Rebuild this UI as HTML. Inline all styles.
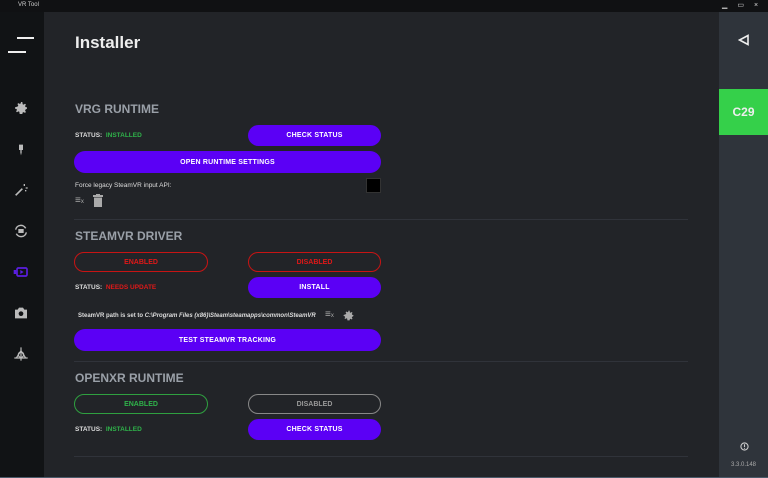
<!DOCTYPE html>
<html><head><style>
*{margin:0;padding:0;box-sizing:border-box}
body{width:768px;height:478px;background:#222428;font-family:"Liberation Sans",sans-serif;position:relative;overflow:hidden}
.a{position:absolute}
.btn{position:absolute;border-radius:11px;background:#5b00f5;color:#fff;font-size:7px;font-weight:bold;display:flex;align-items:center;justify-content:center;letter-spacing:.2px}
.ob{position:absolute;border-radius:11px;border:1.5px solid;font-size:7px;font-weight:bold;display:flex;align-items:center;justify-content:center}
.h{position:absolute;left:75px;color:#9aa0a8;font-size:12px;font-weight:bold}
.s{position:absolute;left:75px;font-size:6.5px;font-weight:bold;color:#ddd}
.line{position:absolute;left:74px;width:614px;height:1px;background:#30333a}
.ic{position:absolute;left:13px;width:16px;height:16px}
</style></head><body>
<div class="a" style="left:0;top:0;width:768px;height:12px;background:#101113"></div>
<div class="a" style="left:18px;top:2px;font-size:6px;color:#ccc">VR Tool</div>
<div class="a" style="left:722px;top:1px;font-size:7px;color:#ddd;letter-spacing:10px">▁▭×</div>
<div class="a" style="left:0;top:12px;width:44px;height:466px;background:#111315"></div>
<div class="a" style="left:17px;top:37px;width:17px;height:2px;background:#eee"></div>
<div class="a" style="left:8px;top:51px;width:18px;height:2px;background:#eee"></div>
<svg class="ic" style="top:100px" viewBox="0 0 24 24"><path fill="#bbb" d="M12 8a4 4 0 100 8 4 4 0 000-8zm9 5v-2l-2.3-.5-.6-1.5 1.3-2-1.4-1.4-2 1.3-1.5-.6L14 3h-2l-.5 2.3-1.5.6-2-1.3-1.4 1.4 1.3 2-.6 1.5L3 11v2l2.3.5.6 1.5-1.3 2 1.4 1.4 2-1.3 1.5.6L10 21h4l.5-2.3 1.5-.6 2 1.3 1.4-1.4-1.3-2 .6-1.5z"/></svg>
<svg class="ic" style="top:142px" viewBox="0 0 24 24"><path fill="#bbb" d="M9 4h6v8h-2v4l-1 4-1-4v-4H9z"/></svg>
<svg class="ic" style="top:182px" viewBox="0 0 24 24"><path stroke="#bbb" stroke-width="2.5" d="M4 20L14 10"/><path fill="#bbb" d="M16 3h2v3h-2zM19 8h3v2h-3zM18 12h2v2h-2z"/></svg>
<svg class="ic" style="top:223px" viewBox="0 0 24 24"><path fill="none" stroke="#bbb" stroke-width="2.2" d="M4 10a8 8 0 0115-2M20 14a8 8 0 01-15 2"/><rect x="8" y="9" width="8" height="6" fill="#bbb"/></svg>
<svg class="ic" style="top:264px" viewBox="0 0 24 24"><rect x="6" y="6" width="15" height="12" rx="2" fill="none" stroke="#5b1ee0" stroke-width="2.5"/><path fill="#5b1ee0" d="M11 9l5 3-5 3zM1 9h4v6H1z"/></svg>
<svg class="ic" style="top:305px" viewBox="0 0 24 24"><path fill="#bbb" d="M3 7h4l2-3h6l2 3h4v13H3z"/><circle cx="12" cy="13" r="3.5" fill="#111315"/></svg>
<svg class="ic" style="top:346px" viewBox="0 0 24 24"><path fill="none" stroke="#bbb" stroke-width="1.8" d="M12 2v20M2 18h20M12 7l-7 11M12 7l7 11"/><circle cx="12" cy="13" r="4" fill="none" stroke="#bbb" stroke-width="1.8"/></svg>

<div class="a" style="left:75px;top:33px;font-size:17px;font-weight:bold;color:#eee">Installer</div>

<div class="h" style="top:102px">VRG RUNTIME</div>
<div class="s" style="top:132px">STATUS:&nbsp; <span style="color:#2fb34a">INSTALLED</span></div>
<div class="btn" style="left:248px;top:125px;width:133px;height:21px">CHECK STATUS</div>
<div class="btn" style="left:74px;top:151px;width:307px;height:22px">OPEN RUNTIME SETTINGS</div>
<div class="s" style="top:182px;font-weight:normal;color:#ddd">Force legacy SteamVR input API:</div>
<div class="a" style="left:366px;top:178px;width:15px;height:15px;background:#000;border:1px solid #333"></div>
<div class="a" style="left:75px;top:195px;font-size:10px;color:#aaa">≡<span style="font-size:6px">x</span></div>
<svg class="a" style="left:93px;top:194px" width="10" height="13" viewBox="0 0 10 13"><path fill="#aaa" d="M0 1h10v2H0zM3 0h4v1H3zM1 3.5h8V13H1z"/></svg>
<div class="line" style="top:219px"></div>

<div class="h" style="top:229px">STEAMVR DRIVER</div>
<div class="ob" style="left:74px;top:252px;width:134px;height:20px;border-color:#c81414;color:#e01818">ENABLED</div>
<div class="ob" style="left:248px;top:252px;width:133px;height:20px;border-color:#c81414;color:#e01818">DISABLED</div>
<div class="s" style="top:284px">STATUS:&nbsp; <span style="color:#e01818">NEEDS UPDATE</span></div>
<div class="btn" style="left:248px;top:277px;width:133px;height:21px">INSTALL</div>
<div class="a" style="left:78px;top:313px;font-size:6px;font-weight:bold;color:#ddd">SteamVR path is set to <i>C:\Program Files (x86)\Steam\steamapps\common\SteamVR</i></div>
<div class="a" style="left:325px;top:309px;font-size:10px;color:#aaa">≡<span style="font-size:6px">x</span></div>
<svg class="a" style="left:342px;top:309px" width="13" height="13" viewBox="0 0 24 24"><path fill="#aaa" d="M12 8a4 4 0 100 8 4 4 0 000-8zm9 5v-2l-2.3-.5-.6-1.5 1.3-2-1.4-1.4-2 1.3-1.5-.6L14 3h-2l-.5 2.3-1.5.6-2-1.3-1.4 1.4 1.3 2-.6 1.5L3 11v2l2.3.5.6 1.5-1.3 2 1.4 1.4 2-1.3 1.5.6L10 21h4l.5-2.3 1.5-.6 2 1.3 1.4-1.4-1.3-2 .6-1.5z"/></svg>
<div class="btn" style="left:74px;top:329px;width:307px;height:22px">TEST STEAMVR TRACKING</div>
<div class="line" style="top:361px"></div>

<div class="h" style="top:371px">OPENXR RUNTIME</div>
<div class="ob" style="left:74px;top:394px;width:134px;height:20px;border-color:#2fa040;color:#2fb34a">ENABLED</div>
<div class="ob" style="left:248px;top:394px;width:133px;height:20px;border-color:#888;color:#999">DISABLED</div>
<div class="s" style="top:426px">STATUS:&nbsp; <span style="color:#2fb34a">INSTALLED</span></div>
<div class="btn" style="left:248px;top:419px;width:133px;height:21px">CHECK STATUS</div>
<div class="line" style="top:456px"></div>

<div class="a" style="left:719px;top:12px;width:49px;height:466px;background:#2f343b"></div>
<svg class="a" style="left:738px;top:34px" width="12" height="12" viewBox="0 0 12 12"><path d="M10 1.5L1.5 6 10 10.5z" fill="none" stroke="#eee" stroke-width="1.6"/></svg>
<div class="a" style="left:719px;top:89px;width:49px;height:46px;background:#35d04a;color:#eee;font-size:12px;font-weight:bold;display:flex;align-items:center;justify-content:center">C29</div>
<svg class="a" style="left:740px;top:442px" width="9" height="9" viewBox="0 0 10 10"><circle cx="5" cy="5" r="4" fill="none" stroke="#ccc" stroke-width="1.2"/><path d="M5 2.5v3M5 6.5v1" stroke="#ccc" stroke-width="1.2"/></svg>
<div class="a" style="left:719px;top:462px;width:49px;text-align:center;font-size:6px;color:#aaa">3.3.0.148</div>
<div class="a" style="left:0;top:477px;width:768px;height:1px;background:#4a5a6a"></div>
</body></html>
